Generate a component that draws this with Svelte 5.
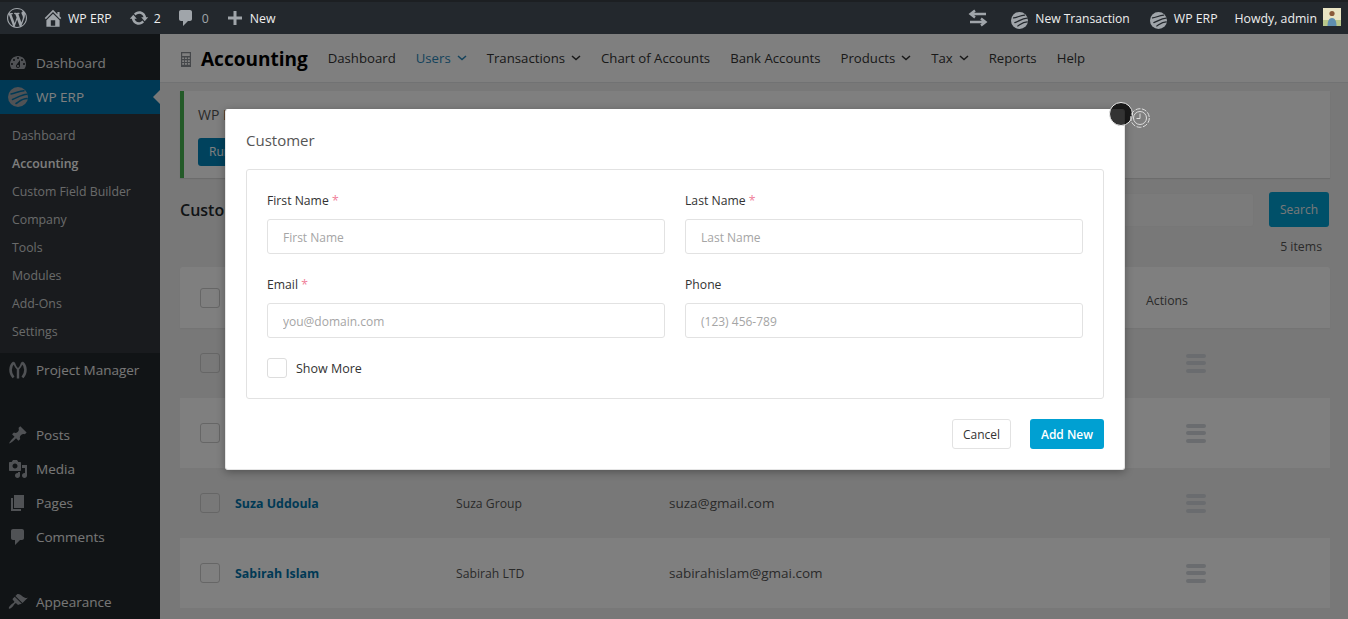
<script>
  const sideTop = [{ label: 'Dashboard', icon: 'dash' }]
  const subItems = ['Dashboard', 'Accounting', 'Custom Field Builder', 'Company', 'Tools', 'Modules', 'Add-Ons', 'Settings']
  const sideMid = [
    { label: 'Posts', icon: 'pin' },
    { label: 'Media', icon: 'media' },
    { label: 'Pages', icon: 'pages' },
    { label: 'Comments', icon: 'comment' }
  ]
  const nav = [
    { label: 'Dashboard' },
    { label: 'Users', caret: true, active: true },
    { label: 'Transactions', caret: true },
    { label: 'Chart of Accounts' },
    { label: 'Bank Accounts' },
    { label: 'Products', caret: true },
    { label: 'Tax', caret: true },
    { label: 'Reports' },
    { label: 'Help' }
  ]
  const rows = [
    { name: '', company: '', email: '' },
    { name: '', company: '', email: '' },
    { name: 'Suza Uddoula', company: 'Suza Group', email: 'suza@gmail.com' },
    { name: 'Sabirah Islam', company: 'Sabirah LTD', email: 'sabirahislam@gmai.com' },
    { name: '', company: '', email: '' }
  ]
  const paths = {
    dash: 'M3.76 16h12.48c1.1-1.37 1.76-3.11 1.76-5 0-4.42-3.58-8-8-8s-8 3.58-8 8c0 1.89.66 3.63 1.76 5zM10 4c.55 0 1 .45 1 1s-.45 1-1 1-1-.45-1-1 .45-1 1-1zM6 6c.55 0 1 .45 1 1s-.45 1-1 1-1-.45-1-1 .45-1 1-1zm8 0c.55 0 1 .45 1 1s-.45 1-1 1-1-.45-1-1 .45-1 1-1zm-5.37 5.55L12 7v6c0 1.1-.9 2-2 2s-2-.9-2-2c0-.57.24-1.08.63-1.45zM4 10c.55 0 1 .45 1 1s-.45 1-1 1-1-.45-1-1 .45-1 1-1zm12 0c.55 0 1 .45 1 1s-.45 1-1 1-1-.45-1-1 .45-1 1-1zm-5 3c0-.55-.45-1-1-1s-1 .45-1 1 .45 1 1 1 1-.45 1-1z',
    home: 'M16 8.5l1.53 1.53-1.06 1.06L10 4.62l-6.47 6.47-1.06-1.06L10 2.5l4 4v-2h2v4zm-6-2.46l6 5.99V18H4v-5.97zM12 17v-5H8v5h4z',
    update: 'M10.2 3.28c3.53 0 6.43 2.61 6.92 6h2.08l-3.5 4-3.5-4h2.32c-.45-1.97-2.21-3.45-4.32-3.45-1.45 0-2.73.71-3.54 1.78L4.95 5.66C6.23 4.2 8.11 3.28 10.2 3.28zm-.4 13.44c-3.52 0-6.43-2.61-6.92-6H.8l3.5-4c1.17 1.33 2.33 2.67 3.5 4H5.48c.45 1.97 2.21 3.45 4.32 3.45 1.45 0 2.73-.71 3.54-1.78l1.71 1.95c-1.28 1.46-3.15 2.38-5.25 2.38z',
    comment: 'M5 2h9c1.1 0 2 .9 2 2v7c0 1.1-.9 2-2 2h-2l-5 5v-5H5c-1.1 0-2-.9-2-2V4c0-1.1.9-2 2-2z',
    plus: 'M17 8.5v3h-5.5V17h-3v-5.5H3v-3h5.5V3h3v5.5z',
    pin: 'M10.44 3.02l1.82-1.82 6.36 6.35-1.83 1.82c-1.05-.68-2.48-.57-3.41.36l-.75.75c-.92.93-1.04 2.35-.35 3.41l-1.83 1.82-2.41-2.41-2.8 2.79c-.42.42-3.38 2.71-3.8 2.29s1.86-3.39 2.28-3.81l2.79-2.79L4.1 9.36l1.83-1.82c1.05.69 2.48.57 3.4-.36l.75-.75c.93-.92 1.05-2.35.36-3.41z',
    media: 'M13 11V4c0-.55-.45-1-1-1h-1.67L9 1H5L3.67 3H2c-.55 0-1 .45-1 1v7c0 .55.45 1 1 1h10c.55 0 1-.45 1-1zM7 4.5c1.38 0 2.5 1.12 2.5 2.5S8.38 9.5 7 9.5 4.5 8.38 4.5 7 5.62 4.5 7 4.5zM14 6h5v10.5c0 1.38-1.12 2.5-2.5 2.5S14 17.88 14 16.5s1.12-2.5 2.5-2.5c.17 0 .34.02.5.05V9h-3V6zm-4 8.05V13h2v3.5c0 1.38-1.12 2.5-2.5 2.5S7 17.88 7 16.5 8.12 14 9.5 14c.17 0 .34.02.5.05z',
    pages: 'M6 15V2h10v13H6zm-1 1h8v2H3V5h2v11z',
    brush: 'M14.5 11L7.4 4l1.5-1.5c.5-.6 2.3-.5 3.5.3 1.2.8 1.4 1.3 2.9 2.1 1.2.6 2.5 1.3 4.5.9zm-.7.7L6.7 4.7 4.9 6.5c-.4.4-.4 1 0 1.4L6 9c.4.4.4 1 0 1.4-.6.6-1.4 1.1-2.2 1.7-.4.3-.7.5-1 .8-1.4 1.4-2.4 3-1.9 3.6.5.7 2.2-.4 3.6-1.8.3-.3.6-.7.8-1 .6-.8 1.1-1.6 1.7-2.2.4-.4 1-.4 1.4 0l1.1 1.1c.4.4 1 .4 1.4 0z',
    wp: 'M20 10c0-5.51-4.49-10-10-10C4.48 0 0 4.49 0 10c0 5.52 4.48 10 10 10 5.51 0 10-4.48 10-10zM7.78 15.37L4.37 6.22c.55-.02 1.17-.08 1.17-.08.5-.06.44-1.13-.06-1.11 0 0-1.45.11-2.37.11-.18 0-.37 0-.58-.01C4.12 2.69 6.87 1.11 10 1.11c2.33 0 4.45.87 6.05 2.34-.68-.11-1.65.39-1.65 1.58 0 .74.45 1.36.9 2.1.35.61.55 1.36.55 2.46 0 1.49-1.4 5-1.4 5l-3.03-8.37c.54-.02.82-.17.82-.17.5-.05.44-1.25-.06-1.22 0 0-1.44.12-2.38.12-.87 0-2.33-.12-2.33-.12-.5-.03-.56 1.2-.06 1.22l.92.08 1.26 3.41zM17.41 10c.24-.64.74-1.87.43-4.25.7 1.29 1.05 2.71 1.05 4.25 0 3.29-1.73 6.24-4.4 7.78.97-2.59 1.94-5.2 2.92-7.78zM6.1 18.09C3.12 16.65 1.11 13.53 1.11 10c0-1.3.23-2.48.72-3.59C3.25 10.3 4.67 14.2 6.1 18.09zm4.03-6.63l2.58 6.98c-.86.29-1.76.45-2.71.45-.79 0-1.57-.11-2.29-.33.81-2.38 1.62-4.74 2.42-7.1z'
  }
</script>

{#snippet icon(name, size, cls)}
  <svg class={cls} width={size} height={size} viewBox="0 0 20 20" fill="currentColor" aria-hidden="true"><path d={paths[name]} /></svg>
{/snippet}

{#snippet erpLogo(size, cls)}
  <svg class={cls} width={size} height={size} viewBox="0 0 20 20" aria-hidden="true">
    <circle cx="10" cy="10" r="10" fill="currentColor" />
    <g fill="none" stroke="var(--cut)" stroke-width="1.5" stroke-linecap="round">
      <path d="M3 7C7 6.500 11 4 16 3.800" />
      <path d="M4.500 12.500C9 11 13 7.500 19 7.200" />
      <path d="M8 16.500c3-1.800 6-5 11-5" />
    </g>
  </svg>
{/snippet}

{#snippet caret()}
  <svg class="caret" width="10" height="6" viewBox="0 0 10 6" aria-hidden="true"><path d="M1 1l4 3.600L9 1" fill="none" stroke="currentColor" stroke-width="1.500" /></svg>
{/snippet}

<div class="page">
  <header class="adminbar">
    <div class="ab-left">
      <span class="ab wp">{@render icon('wp', 20)}</span>
      <span class="ab home">{@render icon('home', 22)}<b>WP ERP</b></span>
      <span class="ab upd">{@render icon('update', 20)}<b>2</b></span>
      <span class="ab com">{@render icon('comment', 20)}<b class="zero">0</b></span>
      <span class="ab add">{@render icon('plus', 20)}<b>New</b></span>
    </div>
    <div class="ab-right">
      <svg class="swap" width="20" height="18" viewBox="0 0 20 18" aria-hidden="true">
        <path d="M7 1.500L2.500 5 7 8.500M3 5h15" fill="none" stroke="currentColor" stroke-width="2.400" />
        <path d="M13 9.500l4.500 3.500-4.500 3.500M17 13H2" fill="none" stroke="currentColor" stroke-width="2.400" />
      </svg>
      <span class="ab tx">{@render erpLogo(17, 'abl')}<b>New Transaction</b></span>
      <span class="ab erp">{@render erpLogo(17, 'abl')}<b>WP ERP</b></span>
      <span class="ab howdy"><b>Howdy, admin</b>
        <svg class="avatar" width="18" height="18" viewBox="0 0 18 18" aria-hidden="true">
          <rect width="18" height="18" fill="#e9e4c4" />
          <rect y="12" width="18" height="6" fill="#b9c78a" />
          <circle cx="9" cy="5.500" r="2.600" fill="#8a5a3a" />
          <path d="M4.500 18c0-5 1.500-8 4.500-8s4.500 3 4.500 8z" fill="#5f8fb0" />
        </svg>
      </span>
    </div>
  </header>

  <div class="body">
    <aside class="side">
      <ul class="menu top">
        {#each sideTop as m}
          <li>{@render icon(m.icon, 20, 'mi')}{m.label}</li>
        {/each}
      </ul>
      <div class="current">
        {@render erpLogo(20, 'mi erp-mi')}WP ERP
        <span class="arrow"></span>
      </div>
      <ul class="sub">
        {#each subItems as s}
          <li class:on={s === 'Accounting'}>{s}</li>
        {/each}
      </ul>
      <div class="pm">
        <svg class="mi" width="20" height="20" viewBox="0 0 20 20" aria-hidden="true">
          <g fill="none" stroke="currentColor" stroke-width="2.600">
            <path d="M6 2.500C1.500 6 1.500 13 5.500 17.500" />
            <path d="M14 2.500C18.500 6 18.500 13 14.500 17.500" />
            <path d="M6 2.500C7 6 8 8 10 9c2-1 3-3 4-6.500" stroke-width="1.800" />
            <path d="M10 9v9.500" stroke-width="2.400" />
          </g>
        </svg>Project Manager
      </div>
      <ul class="menu mid">
        {#each sideMid as m}
          <li>{@render icon(m.icon, 20, 'mi')}{m.label}</li>
        {/each}
      </ul>
      <ul class="menu last">
        <li>{@render icon('brush', 20, 'mi')}Appearance</li>
      </ul>
    </aside>

    <main class="main">
      <div class="erp-head">
        <svg class="calc" width="10" height="15" viewBox="0 0 10 15" aria-hidden="true">
          <path fill-rule="evenodd" fill="currentColor" d="M0 0h10v15H0zM1.200 1.200v2.800h7.600V1.200zM1.200 5.400v1.700h1.900V5.400zm2.800 0v1.700h1.900V5.400zm2.900 0v1.700h1.900V5.400zM1.200 8.200v1.700h1.900V8.200zm2.800 0v1.700h1.900V8.200zm2.900 0v1.700h1.900V8.200zM1.200 11v1.700h1.900V11zm2.800 0v1.700h1.900V11zm2.900 0v1.700h1.900V11z" />
        </svg>
        <h1>Accounting</h1>
        <nav class="nav">
          {#each nav as n}
            <span class="nv" class:active={n.active}>{n.label}{#if n.caret}{@render caret()}{/if}</span>
          {/each}
        </nav>
      </div>

      <div class="wrap">
        <div class="notice">
          <p>WP ERP</p>
          <span class="run">Run</span>
        </div>

        <div class="list-head">
          <h2>Customers</h2>
          <span class="search-input"></span>
          <span class="search-btn">Search</span>
        </div>
        <div class="count">5 items</div>

        <div class="table">
          <div class="tr th">
            <span class="cb"></span>
            <span class="td-actions label">Actions</span>
          </div>
          {#each rows as r}
            <div class="tr">
              <span class="cb"></span>
              <a class="name" href="#top">{r.name}</a>
              <span class="company">{r.company}</span>
              <span class="email">{r.email}</span>
              <span class="td-actions"><span class="burger"><i></i><i></i><i></i></span></span>
            </div>
          {/each}
        </div>
      </div>
    </main>
  </div>

  <div class="overlay"></div>

  <div class="modal">
    <span class="close"></span>
    <svg class="clock" width="22" height="22" viewBox="0 0 22 22" aria-hidden="true">
      <g fill="none" stroke="#e8e8e8" stroke-width=".9">
        <circle cx="11" cy="11" r="6.500" />
        <path d="M11 6.500V11.500H7.500" />
        <circle cx="11" cy="11" r="9.300" stroke-dasharray="5 1.500" />
      </g>
    </svg>
    <h3>Customer</h3>
    <div class="fields">
      <div class="grid">
        <label class="field">
          <span class="lbl">First Name <em>*</em></span>
          <input type="text" placeholder="First Name" />
        </label>
        <label class="field">
          <span class="lbl">Last Name <em>*</em></span>
          <input type="text" placeholder="Last Name" />
        </label>
        <label class="field">
          <span class="lbl">Email <em>*</em></span>
          <input type="text" placeholder="you@domain.com" />
        </label>
        <label class="field">
          <span class="lbl">Phone</span>
          <input type="text" placeholder="(123) 456-789" />
        </label>
      </div>
      <div class="more"><span class="box"></span>Show More</div>
    </div>
    <div class="actions">
      <button class="cancel" type="button">Cancel</button>
      <button class="save" type="button">Add New</button>
    </div>
  </div>
</div>

<style>
  :global(body) {
    margin: 0;
    background: #f1f1f1;
    font-family: "Open Sans", "Liberation Sans", sans-serif;
  }

  .page {
    position: relative;
    height: 619px;
    overflow: hidden;
    display: flex;
    flex-direction: column;
    font-size: 13px;
    color: #444;
  }

  /* admin bar sits above the overlay */
  .adminbar {
    position: relative;
    z-index: 3;
    height: 32px;
    flex: none;
    background: #23282d;
    border-top: 2px solid #1c1f22;
    display: flex;
    justify-content: space-between;
    color: #eee;
  }
  .ab-left,
  .ab-right,
  .ab {
    display: flex;
    align-items: center;
  }
  .ab svg {
    color: #a0a5aa;
    flex: none;
  }
  .ab b {
    font-weight: 500;
    font-size: 12.300px;
  }
  .wp { margin-left: 7px; }
  .home { margin-left: 15px; }
  .home b { margin-left: 4px; }
  .upd { margin-left: 17px; }
  .upd b { margin-left: 5px; }
  .com { margin-left: 15px; }
  .com b { margin-left: 6px; }
  .com .zero { color: #a0a5aa; }
  .add { margin-left: 16px; }
  .add b { margin-left: 5px; }
  .swap {
    color: #a0a5aa;
    margin-right: 23px;
    align-self: center;
  }
  .tx b { margin-left: 7px; font-size: 12.100px; }
  .erp b { margin-left: 7px; }
  .erp { margin-left: 20px; }
  .howdy { margin-left: 17px; margin-right: 7px; }
  .avatar { margin-left: 6px; margin-top: -3px; }
  .abl { --cut: #23282d; margin-top: 5px; }

  .body {
    flex: 1;
    display: flex;
    min-height: 0;
  }

  .side {
    width: 160px;
    flex: none;
    background: #23282d;
    color: #eee;
    font-size: 13.500px;
    padding-top: 12px;
  }
  .menu {
    list-style: none;
    margin: 0;
    padding: 0;
  }
  .menu li,
  .current,
  .pm {
    height: 34px;
    display: flex;
    align-items: center;
    padding-left: 8px;
  }
  .mi {
    color: #a0a5aa;
    margin-right: 8px;
    flex: none;
  }
  .erp-mi { --cut: #0073aa; }
  .current {
    background: #0073aa;
    color: #fff;
    position: relative;
  }
  .arrow {
    position: absolute;
    right: 0;
    top: 10px;
    border: 7px solid transparent;
    border-right-color: #f1f1f1;
    border-left: 0;
  }
  .sub {
    list-style: none;
    margin: 0;
    padding: 8px 0 7px;
    background: #32373c;
    font-size: 12.300px;
    color: #d3d4d5;
  }
  .sub li {
    height: 28px;
    line-height: 28px;
    padding-left: 12px;
  }
  .sub .on {
    font-weight: 600;
    color: #fff;
  }
  .mid { margin-top: 31px; }
  .last { margin-top: 31px; }

  .main {
    flex: 1;
    min-width: 0;
  }
  .erp-head {
    height: 49px;
    background: #fff;
    border-bottom: 1px solid #e2e4e7;
    display: flex;
    align-items: center;
    padding-left: 21px;
    box-sizing: border-box;
  }
  .calc {
    color: #8a8f94;
    margin-right: 10px;
    margin-top: 3px;
  }
  h1 {
    margin: 2px 0 0;
    font-size: 19px;
    font-weight: 700;
    color: #000;
  }
  .nav {
    display: flex;
    align-items: center;
    gap: 20px;
    margin-left: 20px;
    color: #333;
    font-size: 13.200px;
  }
  .nv.active { color: #2a86b8; }
  .caret {
    margin-left: 6px;
    vertical-align: 2px;
  }

  .wrap { padding: 8px 18px 0 20px; }
  .notice {
    height: 87px;
    box-sizing: border-box;
    background: #fff;
    border-left: 4px solid #46b450;
    box-shadow: 0 1px 1px rgba(0, 0, 0, .1);
    padding: 13px 14px;
  }
  .notice p {
    margin: 0;
    font-size: 14px;
    line-height: 22px;
    color: #555;
  }
  .run {
    display: inline-block;
    margin-top: 12px;
    background: #0085ba;
    color: #fff;
    border-radius: 3px;
    height: 28px;
    line-height: 28px;
    padding: 0 11px;
    font-size: 12px;
  }
  .list-head {
    display: flex;
    align-items: center;
    margin-top: 14px;
    height: 35px;
    padding-right: 1px;
  }
  h2 {
    margin: 0;
    font-size: 16px;
    font-weight: 600;
    color: #23282d;
    margin-right: auto;
  }
  .search-input {
    width: 300px;
    height: 34px;
    box-sizing: border-box;
    background: #f7f7f7;
    border: 1px solid #eee;
    border-radius: 3px;
    margin-right: 15px;
  }
  .search-btn {
    width: 60px;
    height: 35px;
    line-height: 35px;
    text-align: center;
    background: #00a0d2;
    color: #f1f1f1;
    border-radius: 3px;
    font-size: 12px;
  }
  .count {
    text-align: right;
    padding-right: 8px;
    margin-top: 11px;
    font-size: 12.300px;
    line-height: 18px;
    color: #555;
  }
  .table { margin-top: 11px; }
  .tr {
    height: 70px;
    display: flex;
    align-items: center;
    padding-left: 20px;
    position: relative;
  }
  .th {
    height: 61px;
    background: #fff;
    border-radius: 3px 3px 0 0;
    box-shadow: 0 1px 2px rgba(0, 0, 0, .05);
  }
  .tr:nth-child(odd):not(.th) { background: #fff; }
  .cb {
    width: 20px;
    height: 20px;
    box-sizing: border-box;
    border: 1px solid #ccc;
    border-radius: 3px;
    background: #fff;
    background-clip: padding-box;
    flex: none;
  }
  .tr:not(:nth-child(odd)):not(.th) .cb { background: transparent; }
  .name {
    margin-left: 15px;
    width: 221px;
    font-weight: 700;
    font-size: 12.400px;
    color: #0073aa;
    text-decoration: none;
    flex: none;
  }
  .company {
    width: 213px;
    flex: none;
    color: #555;
    font-size: 12.200px;
  }
  .email {
    color: #555;
    font-size: 13.500px;
  }
  .td-actions {
    position: absolute;
    left: 1006px;
  }
  .label {
    left: 966px;
    margin-top: 6px;
    font-size: 12.300px;
    color: #555;
  }
  .burger {
    display: flex;
    flex-direction: column;
    gap: 3.500px;
    width: 20px;
  }
  .burger i {
    height: 4px;
    border-radius: 2px;
    background: #d4d9de;
    display: block;
  }

  .overlay {
    position: absolute;
    inset: 0;
    background: rgba(0, 0, 0, .5);
    z-index: 1;
  }

  .modal {
    position: absolute;
    z-index: 2;
    left: 225px;
    top: 109px;
    width: 900px;
    height: 361px;
    box-sizing: border-box;
    background: #fff;
    border: 1px solid #e5e5e5;
    border-top-color: #fff;
    border-radius: 3px;
    box-shadow: 0 2px 8px rgba(0, 0, 0, .33);
    padding: 0 20px;
  }
  .close {
    position: absolute;
    right: -9px;
    top: -8px;
    width: 24px;
    height: 24px;
    box-sizing: border-box;
    border-radius: 50%;
    background: rgba(0, 0, 0, .8);
    border: 1px solid #eee;
  }
  .clock {
    position: absolute;
    left: 903px;
    top: -3px;
  }
  h3 {
    margin: 0;
    height: 59px;
    line-height: 61px;
    font-size: 15px;
    font-weight: 400;
    color: #555;
  }
  .fields {
    height: 230px;
    box-sizing: border-box;
    border: 1px solid #e2e2e2;
    border-radius: 3px;
    padding: 20px 20px 0;
  }
  .grid {
    display: grid;
    grid-template-columns: 398px 398px;
    column-gap: 20px;
    row-gap: 20px;
  }
  .field { display: block; }
  .lbl {
    display: block;
    height: 29px;
    line-height: 21px;
    font-size: 12.200px;
    color: #333;
  }
  .lbl em {
    color: #f0809a;
    font-style: normal;
  }
  input {
    display: block;
    width: 100%;
    height: 35px;
    box-sizing: border-box;
    border: 1px solid #e2e2e2;
    border-radius: 3px;
    padding: 2px 15px 0;
    font: 12px "Open Sans", "Liberation Sans", sans-serif;
    background: #fff;
    outline: none;
  }
  input::placeholder {
    color: #a5a5a5;
    opacity: 1;
  }
  .more {
    display: flex;
    align-items: center;
    margin-top: 20px;
    font-size: 12.500px;
    color: #333;
  }
  .box {
    width: 20px;
    height: 20px;
    box-sizing: border-box;
    border: 1px solid #ddd;
    border-radius: 3px;
    margin-right: 9px;
  }
  .actions {
    display: flex;
    justify-content: flex-end;
    gap: 19px;
    margin-top: 20px;
  }
  button {
    height: 30px;
    border-radius: 3px;
    font: 12px "Open Sans", "Liberation Sans", sans-serif;
    padding: 0;
  }
  .cancel {
    width: 59px;
    background: #fff;
    border: 1px solid #e2e2e2;
    color: #333;
  }
  .save {
    width: 74px;
    background: #00a0d2;
    border: 0;
    color: #fff;
    font-weight: 600;
  }
</style>
